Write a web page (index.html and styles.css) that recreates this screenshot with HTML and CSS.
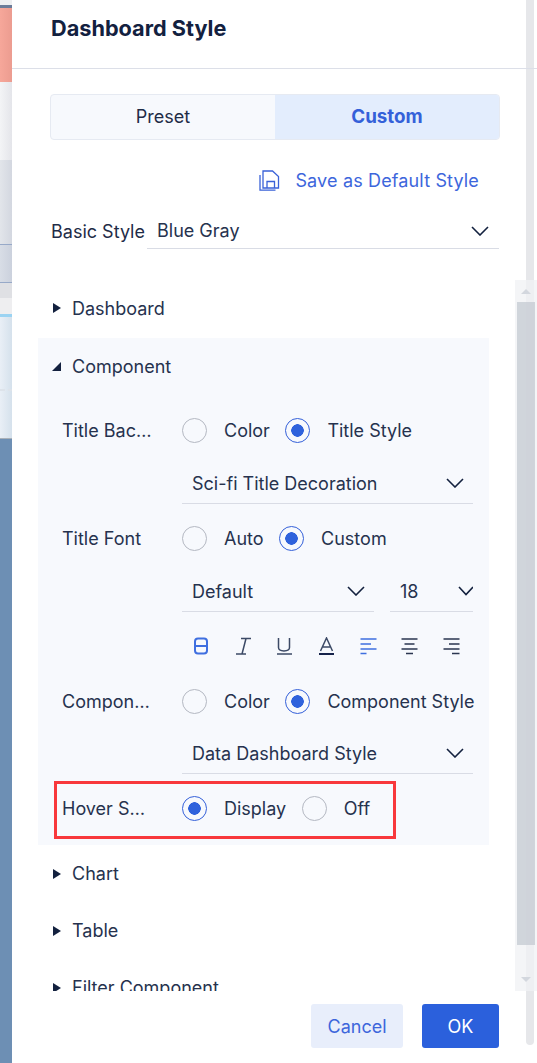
FILE: index.html
```html
<!DOCTYPE html>
<html lang="en">
<head>
  <meta charset="UTF-8" />
  <title>Dashboard Style</title>
  <link rel="stylesheet" href="styles.css">
</head>
<body>
  <div class="backdrop">
    <div class="bd-dark"></div>
    <div class="bd-red"></div>
    <div class="bd-light"></div>
    <div class="bd-gray"></div>
    <div class="bd-line"></div>
    <div class="bd-gray2"></div>
    <div class="bd-line"></div>
    <div class="bd-gray3"></div>
    <div class="bd-white"></div>
    <div class="bd-sky"></div>
    <div class="bd-pale"><div class="bd-dash"></div></div>
    <div class="bd-blue"></div>
  </div>

  <div class="panel">
    <div class="outer-track"></div>

    <div class="panel-head">Dashboard Style</div>

    <div class="tabs">
      <div class="tab">Preset</div>
      <div class="tab active">Custom</div>
    </div>

    <div class="save-row">
      <svg class="save-icon" width="21" height="21" viewBox="0 0 21 21" fill="none" stroke="#3a62d8" stroke-width="1.300">
        <path d="M4 1h9.500l6 5.500V18H4z"/>
        <path d="M8 18v-6.500h7.500V18"/>
        <path d="M1 5v15.200h15.500"/>
      </svg>
      <span>Save as Default Style</span>
    </div>

    <div class="basic-row">
      <span class="basic-label">Basic Style</span>
      <div class="select basic-select">
        <span>Blue Gray</span>
        <svg class="chev" width="18" height="10" viewBox="0 0 18 10"><path d="M1 1l8 8 8-8"/></svg>
      </div>
    </div>

    <div class="scroll-area">
      <div class="section-row first"><i class="tri"></i>Dashboard</div>

      <div class="component">
        <div class="section-row open"><i class="tri-open"></i>Component</div>

        <div class="field field-1">
          <span class="field-label">Title Bac…</span>
          <div class="radios">
            <span class="radio"></span><span class="radio-text">Color</span>
            <span class="radio on"></span><span class="radio-text">Title Style</span>
          </div>
        </div>
        <div class="select sub-select">
          <span class="select-text">Sci-fi Title Decoration</span>
          <svg class="chev" width="18" height="10" viewBox="0 0 18 10"><path d="M1 1l8 8 8-8"/></svg>
        </div>

        <div class="field field-2">
          <span class="field-label">Title Font</span>
          <div class="radios">
            <span class="radio"></span><span class="radio-text">Auto</span>
            <span class="radio on"></span><span class="radio-text">Custom</span>
          </div>
        </div>
        <div class="font-row">
          <div class="select font-family">
            <span class="select-text">Default</span>
            <svg class="chev" width="18" height="10" viewBox="0 0 18 10"><path d="M1 1l8 8 8-8"/></svg>
          </div>
          <div class="select font-size">
            <span class="select-text">18</span>
            <svg class="chev" width="15" height="10" viewBox="0 0 15 10"><path d="M1 1l7 7.500L15 1"/></svg>
          </div>
        </div>

        <div class="format-row">
          <svg width="17" height="18" viewBox="0 0 17 18" fill="none" stroke="#3f6fe0" stroke-width="2"><rect x="2" y="1.500" width="12" height="15" rx="3"/><path d="M2 9h12"/></svg>
          <svg width="17" height="18" viewBox="0 0 17 18" fill="none" stroke="#3c4a66" stroke-width="1.500"><path d="M6 1.500h10M11 1.500L7 17M1 17h10"/></svg>
          <svg width="17" height="18" viewBox="0 0 17 18" fill="none" stroke="#3c4a66" stroke-width="1.500"><path d="M2.500 1v9.500c0 4.500 11 4.500 11 0V1M1 17h15"/></svg>
          <svg width="17" height="18" viewBox="0 0 17 18" fill="none" stroke="#3c4a66" stroke-width="1.500"><path d="M2.500 14L8.500 1l6 13M4.500 10h8"/><path d="M1 17h15" stroke="#16234a" stroke-width="2"/></svg>
          <svg width="17" height="18" viewBox="0 0 17 18" fill="none" stroke="#3f6fe0" stroke-width="1.500"><path d="M0.500 2h16M0.500 7h10.500M0.500 12h16M0.500 16.500h6"/></svg>
          <svg width="17" height="18" viewBox="0 0 17 18" fill="none" stroke="#2b3650" stroke-width="1.500"><path d="M0.500 2h16M3.500 7h10M0.500 12h16M5 16.500h7"/></svg>
          <svg width="17" height="18" viewBox="0 0 17 18" fill="none" stroke="#2b3650" stroke-width="1.500"><path d="M0.500 2h16M6 7h10.500M0.500 12h16M9 16.500h7.500"/></svg>
        </div>

        <div class="field field-3">
          <span class="field-label">Compon…</span>
          <div class="radios">
            <span class="radio"></span><span class="radio-text">Color</span>
            <span class="radio on"></span><span class="radio-text">Component Style</span>
          </div>
        </div>
        <div class="select sub-select sub-select-last">
          <span class="select-text">Data Dashboard Style</span>
          <svg class="chev" width="18" height="10" viewBox="0 0 18 10"><path d="M1 1l8 8 8-8"/></svg>
        </div>

        <div class="field field-4">
          <span class="field-label">Hover S…</span>
          <div class="radios">
            <span class="radio on"></span><span class="radio-text">Display</span>
            <span class="radio"></span><span class="radio-text">Off</span>
          </div>
          <div class="highlight"></div>
        </div>
      </div>

      <div class="section-row"><i class="tri"></i>Chart</div>
      <div class="section-row"><i class="tri"></i>Table</div>
      <div class="section-row"><i class="tri"></i>Filter Component</div>
    </div>

    <div class="scrollbar">
      <div class="sb-up"></div>
      <div class="sb-thumb"></div>
      <div class="sb-down"></div>
    </div>

    <div class="footer">
      <button class="btn btn-cancel">Cancel</button>
      <button class="btn btn-ok">OK</button>
    </div>
  </div>
</body>
</html>
```

FILE: styles.css
```css
* {
  box-sizing: border-box;
}

html, body {
  margin: 0;
  padding: 0;
  height: 1063px;
  overflow: hidden;
}

body {
  display: flex;
  width: 537px;
  font-family: Inter, "Liberation Sans", sans-serif;
  font-size: 18px;
  color: #1f2c47;
  background: #fff;
}

/* what is visible of the page behind the panel */
.backdrop {
  width: 12px;
  height: 1063px;
  flex: none;
  display: flex;
  flex-direction: column;
}

.bd-dark { height: 8px; background: linear-gradient(#eeeff1 5px, #6b7c99 5px); }
.bd-red { height: 74px; background: linear-gradient(90deg, #f6a79a, #ec9c90); }
.bd-light { height: 78px; background: linear-gradient(90deg, #f3f4f6, #e4e5ea); }
.bd-gray { height: 84px; background: linear-gradient(90deg, #e2e5ea, #d3d7e0); }
.bd-line { height: 1px; background: #97a9c8; }
.bd-gray2 { height: 37px; background: linear-gradient(90deg, #d8dde6, #cbd1dd); }
.bd-gray3 { height: 15px; background: #dfe0e4; }
.bd-white { height: 16px; background: #eeeef0; }
.bd-sky { height: 3px; background: #9bd3f2; }
.bd-pale { height: 121px; padding-top: 72px; background: linear-gradient(90deg, #e9eff6, #d5e1ec); }
.bd-dash { height: 2px; background: repeating-linear-gradient(90deg, #dde3ea 0 5px, transparent 5px 8px); }
.bd-blue { flex: 1; background: #6d8fb4; border-top: 1px solid #a9b0b8; }

.panel {
  position: relative;
  width: 525px;
  flex: none;
  height: 1063px;
  background: #fff;
  display: flex;
  flex-direction: column;
}

.outer-track {
  position: absolute;
  left: 514px;
  top: 0;
  width: 8px;
  height: 1045px;
  border-radius: 0 0 4px 4px;
  background: #e6e7ea;
}

.panel-head {
  position: relative;
  height: 69px;
  padding: 15px 0 0 39px;
  border-bottom: 1px solid #dcdfe8;
  font-size: 21.700px;
  font-weight: 700;
  line-height: 26px;
  color: #13213f;
}

.tabs {
  display: flex;
  margin: 25px 0 0 38px;
  width: 450px;
  height: 46px;
  border: 1px solid #e6eaf2;
  border-radius: 4px;
  overflow: hidden;
  background: #f7f9fd;
}

.tab {
  flex: 1;
  text-align: center;
  line-height: 43px;
}

.tab.active {
  background: #e3edfd;
  color: #3460d9;
  font-size: 18.800px;
  font-weight: 700;
}

.save-row {
  display: flex;
  align-items: center;
  justify-content: flex-end;
  gap: 15px;
  height: 24px;
  margin-top: 28px;
  padding-right: 58px;
  color: #3d66dc;
  letter-spacing: 0.150px;
}

.basic-row {
  display: flex;
  align-items: flex-end;
  margin: 21px 0 0 39px;
}

.basic-label {
  width: 96px;
  line-height: 26px;
  padding-bottom: 4px;
}

.select {
  display: flex;
  justify-content: space-between;
  align-items: center;
  border-bottom: 1px solid #d9dce5;
  color: #26324e;
  padding-left: 10px;
}

.select-text {
  padding-top: 2px;
}

.chev {
  fill: none;
  stroke: #13213f;
  stroke-width: 1.600;
}

.basic-select {
  width: 352px;
  height: 36px;
  padding-right: 10px;
}

.scroll-area {
  height: 711px;
  margin-top: 31px;
  overflow: hidden;
}

.section-row {
  display: flex;
  align-items: center;
  height: 57px;
  padding-left: 41px;
  color: #26324e;
}

.section-row.first {
  height: 58px;
  padding-bottom: 2px;
}

.section-row.open {
  height: 56px;
  padding-left: 14px;
}

.tri {
  width: 0;
  height: 0;
  margin-right: 11px;
  border-left: 8px solid #13213f;
  border-top: 5.500px solid transparent;
  border-bottom: 5.500px solid transparent;
}

.tri-open {
  width: 0;
  height: 0;
  margin-right: 11px;
  border-right: 9px solid #13213f;
  border-top: 9px solid transparent;
}

.component {
  margin-left: 26px;
  width: 451px;
  height: 507px;
  background: #f7f9fd;
}

.field {
  position: relative;
  display: flex;
  align-items: center;
  height: 36px;
  padding-left: 24px;
}

.field-label {
  width: 120px;
  flex: none;
  color: #26324e;
}

.radios {
  display: flex;
  align-items: center;
}

.radio {
  width: 25px;
  height: 25px;
  flex: none;
  border: 1px solid #b4b8c2;
  border-radius: 50%;
  margin-right: 17px;
}

.radio.on {
  border-color: #3460d9;
  background: radial-gradient(circle, #2f62dc 0 6px, transparent 6.500px);
}

.radio-text {
  margin-right: 15.500px;
  color: #26324e;
  white-space: nowrap;
}

.sub-select {
  margin: 14px 0 0 144px;
  width: 291px;
  height: 42px;
  padding-right: 9px;
}

.sub-select-last {
  margin-top: 13px;
}

.field-1 { margin-top: 18px; }
.field-2 { margin-top: 16px; }
.field-3 { margin-top: 19px; }
.field-4 { margin-top: 16px; }

.font-row {
  display: flex;
  gap: 16px;
  margin: 14px 0 0 144px;
}

.font-family {
  width: 192px;
  height: 42px;
  padding-right: 9px;
}

.font-size {
  width: 83px;
  height: 42px;
  padding-right: 0;
}

.format-row {
  display: flex;
  gap: 24.700px;
  align-items: center;
  height: 36px;
  margin: 16px 0 0 155px;
}

.highlight {
  position: absolute;
  left: 16px;
  top: -9px;
  width: 342px;
  height: 58px;
  border: 3px solid #f8383c;
}

.scrollbar {
  position: absolute;
  left: 503px;
  top: 280px;
  width: 22px;
  height: 711px;
  display: flex;
  flex-direction: column;
  background: rgba(240, 241, 244, 0.75);
}

.sb-up, .sb-down {
  flex: none;
  position: relative;
}

.sb-up {
  height: 22px;
}

.sb-down {
  height: 46px;
}

.sb-up::after, .sb-down::after {
  content: "";
  position: absolute;
  left: 6px;
  border-left: 5px solid transparent;
  border-right: 5px solid transparent;
}

.sb-up::after {
  top: 9px;
  border-bottom: 5px solid #d3d7de;
}

.sb-down::after {
  top: 32px;
  border-top: 5px solid #d3d7de;
}

.sb-thumb {
  flex: 1;
  margin: 0 2px;
  background: rgba(196, 201, 210, 0.75);
}

.footer {
  display: flex;
  justify-content: flex-end;
  gap: 19px;
  padding: 13px 38px 0 0;
}

.btn {
  height: 44px;
  border: none;
  border-radius: 3px;
  font-family: inherit;
  font-size: 18px;
}

.btn-cancel {
  width: 92px;
  background: #e8eefb;
  color: #3d66dc;
}

.btn-ok {
  width: 77px;
  background: #2b60dc;
  color: #fff;
}
```
